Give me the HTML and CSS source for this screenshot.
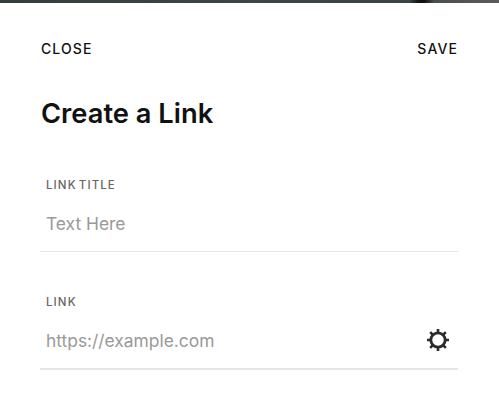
FILE: index.html
```html
<!DOCTYPE html>
<html lang="en">

<head>
  <meta charset="UTF-8">
  <meta name="viewport" content="width=device-width, initial-scale=1.0">
  <title>Create a Link</title>
  <link rel="stylesheet" href="styles.css">
</head>

<body>
  <div class="top-strip"></div>

  <div class="panel">
    <!-- Header actions -->
    <div class="actions">
      <a href="#">Close</a>
      <a href="#">Save</a>
    </div>

    <h1>Create a Link</h1>

    <form>
      <div class="form-group">
        <label for="linkTitle">Link Title</label>
        <input type="text" id="linkTitle" placeholder="Text Here">
      </div>

      <div class="form-group link-group">
        <label for="linkUrl">Link</label>
        <div class="input-row">
          <input type="text" id="linkUrl" placeholder="https://example.com">
          <button type="button" class="gear-btn" aria-label="Link settings">
            <svg width="24" height="24" viewBox="0 0 24 24" fill="none" stroke="#2b2b2b">
              <circle cx="12" cy="12" r="7.2" stroke-width="2.8"/>
              <path d="M12 1v3.5M12 19.5V23M1 12h3.5M19.5 12H23M4.2 4.2l2.5 2.5M17.3 17.3l2.5 2.5M4.2 19.8l2.5-2.5M17.3 6.7l2.5-2.5" stroke-width="2.6"/>
            </svg>
          </button>
        </div>
      </div>
    </form>
  </div>
</body>

</html>
```

FILE: styles.css
```css
* {
  margin: 0;
  padding: 0;
  box-sizing: border-box;
}

body {
  background-color: #fff;
  font-family: 'Inter', 'Liberation Sans', sans-serif;
  overflow: hidden;
}

.top-strip {
  height: 3px;
  background: linear-gradient(90deg, #333d3e 0, #3a4648 50%, #3a4446 82%, #111 84%, #111 85%, #4a4f4f 87%, #5a5c5a 100%);
}

.panel {
  padding: 38px 41px 0 40px;
}

.actions {
  display: flex;
  justify-content: space-between;
  padding-left: 1px;
}

.actions a {
  font-size: 14px;
  font-weight: 500;
  line-height: 16px;
  letter-spacing: 1.1px;
  text-transform: uppercase;
  color: #111;
  text-decoration: none;
}

h1 {
  margin-top: 41px;
  padding-left: 1px;
  font-size: 27.3px;
  font-weight: 600;
  line-height: 32px;
  color: #111;
}

form {
  margin-top: 47px;
}

.form-group {
  border-bottom: 1px solid #e6e6e6;
  padding: 1px 6px 0;
  height: 75px;
}

.link-group {
  margin-top: 42px;
  height: 76px;
  border-bottom: 2px solid #e6e6e6;
}

.form-group label {
  display: block;
  font-size: 11.5px;
  font-weight: 500;
  line-height: 14px;
  letter-spacing: 1.1px;
  word-spacing: -2px;
  text-transform: uppercase;
  color: #666;
}

.form-group input {
  display: block;
  width: 100%;
  margin-top: 21px;
  border: none;
  outline: none;
  font-family: 'Inter', 'Liberation Sans', sans-serif;
  font-size: 17.4px;
  line-height: 22px;
  color: #333;
}

.link-group input {
  margin-top: 20px;
}

.form-group input::placeholder {
  color: #999;
}

.input-row {
  display: flex;
  align-items: center;
}

.gear-btn {
  background: none;
  border: none;
  margin: 19px 2px 0 0;
  display: flex;
}
```
